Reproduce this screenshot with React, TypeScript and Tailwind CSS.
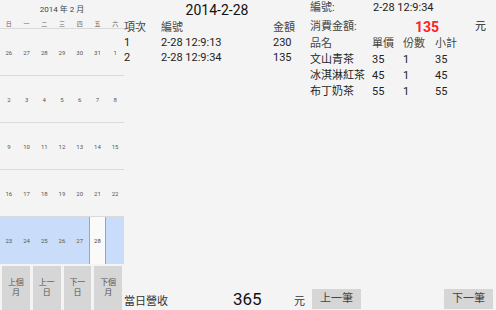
import React from 'react'

const weekdays = ['日', '一', '二', '三', '四', '五', '六']

const weeks = [
  ['26', '27', '28', '29', '30', '31', '1'],
  ['2', '3', '4', '5', '6', '7', '8'],
  ['9', '10', '11', '12', '13', '14', '15'],
  ['16', '17', '18', '19', '20', '21', '22'],
  ['23', '24', '25', '26', '27', '28', ''],
]

const navButtons = [
  ['上個', '月'],
  ['上一', '日'],
  ['下一', '日'],
  ['下個', '月'],
]

const orders = [
  { no: '1', code: '2-28 12:9:13', amount: '230' },
  { no: '2', code: '2-28 12:9:34', amount: '135' },
]

const items = [
  { name: '文山青茶', price: '35', qty: '1', sub: '35' },
  { name: '冰淇淋紅茶', price: '45', qty: '1', sub: '45' },
  { name: '布丁奶茶', price: '55', qty: '1', sub: '55' },
]

const font = { fontFamily: 'Roboto, "Noto Sans CJK TC", sans-serif' }

const Calendar: React.FC = () => (
  <div className="w-[124px] flex flex-col h-full">
    <div className="h-[29px] border-b border-[#dadada]">
      <div className="h-[19px] flex items-center justify-center text-[8px] text-[#444]">2014 年 2 月</div>
      <div className="h-[7px] grid grid-cols-7 text-[6px] text-[#666]">
        {weekdays.map((d) => (
          <div key={d} className="flex items-center justify-center">{d}</div>
        ))}
      </div>
    </div>
    {weeks.map((week, wi) => {
      const last = wi === weeks.length - 1
      return (
        <div
          key={wi}
          className={
            last
              ? 'h-[47px] grid grid-cols-7 bg-[#c9ddfa]'
              : 'h-[47px] grid grid-cols-7 border-b border-[#dadada]'
          }
        >
          {week.map((d, di) => {
            const selected = last && d === '28'
            return (
              <div
                key={di}
                className={
                  selected
                    ? 'flex items-center justify-center text-[6px] text-[#444] bg-[#fafafa] border-x border-[#4cc3ee]'
                    : 'flex items-center justify-center text-[6px] text-[#555]'
                }
              >
                {d}
              </div>
            )
          })}
        </div>
      )
    })}
    <div className="flex-1 flex gap-[3px] px-[2px] pt-[2px]">
      {navButtons.map(([a, b]) => (
        <div
          key={a + b}
          className="flex-1 bg-[#d6d6d6] flex flex-col items-center justify-center text-[8px] leading-[10px] text-[#555]"
        >
          <span>{a}</span>
          <span>{b}</span>
        </div>
      ))}
    </div>
  </div>
)

export default function App() {
  return (
    <div
      className="w-[496px] h-[310px] flex bg-[#f4f4f4] text-[#222] overflow-hidden"
      style={font}
    >
      <Calendar />
      <div className="flex-1 flex flex-col">
        <div className="flex-1 flex">
          {/* day list */}
          <div className="w-[186px]">
            <div className="text-center text-[14px] leading-[17px] pt-[2px] text-[#111]">2014-2-28</div>
            <div className="grid grid-cols-[37px_112px_1fr] text-[11px] leading-[15px] pt-[1px]">
              <div className="text-[#444]">項次</div>
              <div className="text-[#444]">編號</div>
              <div className="text-[#444]">金額</div>
              {orders.map((o) => (
                <React.Fragment key={o.no}>
                  <div>{o.no}</div>
                  <div>{o.code}</div>
                  <div>{o.amount}</div>
                </React.Fragment>
              ))}
            </div>
          </div>
          {/* order detail */}
          <div className="flex-1 text-[11px] leading-[16px]">
            <div className="flex">
              <div className="w-[63px] text-[#444]">編號:</div>
              <div>2-28 12:9:34</div>
            </div>
            <div className="flex items-center h-[20px] pt-[2px]">
              <div className="w-[105px] text-[#444]">消費金額:</div>
              <div className="w-[60px] text-[14px] font-bold text-[#ff2222]">135</div>
              <div>元</div>
            </div>
            <div className="grid grid-cols-[62px_31px_32px_1fr]">
              <div className="text-[#444]">品名</div>
              <div className="text-[#444]">單價</div>
              <div className="text-[#444]">份數</div>
              <div className="text-[#444]">小計</div>
              {items.map((it) => (
                <React.Fragment key={it.name}>
                  <div>{it.name}</div>
                  <div>{it.price}</div>
                  <div>{it.qty}</div>
                  <div>{it.sub}</div>
                </React.Fragment>
              ))}
            </div>
          </div>
        </div>
        {/* bottom bar */}
        <div className="h-[24px] flex items-end pb-[1px] pr-[3px]">
          <div className="w-[109px] text-[11px] leading-[14px] text-[#333]">當日營收</div>
          <div className="w-[61px] text-[17px] leading-[20px] text-[#111]">365</div>
          <div className="w-[18px] text-[11px] leading-[14px] text-[#333]">元</div>
          <div className="w-[49px] h-[20px] bg-[#d6d6d6] flex items-center justify-center text-[11px] text-[#444]">上一筆</div>
          <div className="flex-1" />
          <div className="w-[49px] h-[20px] bg-[#d6d6d6] flex items-center justify-center text-[11px] text-[#444]">下一筆</div>
        </div>
      </div>
    </div>
  )
}
